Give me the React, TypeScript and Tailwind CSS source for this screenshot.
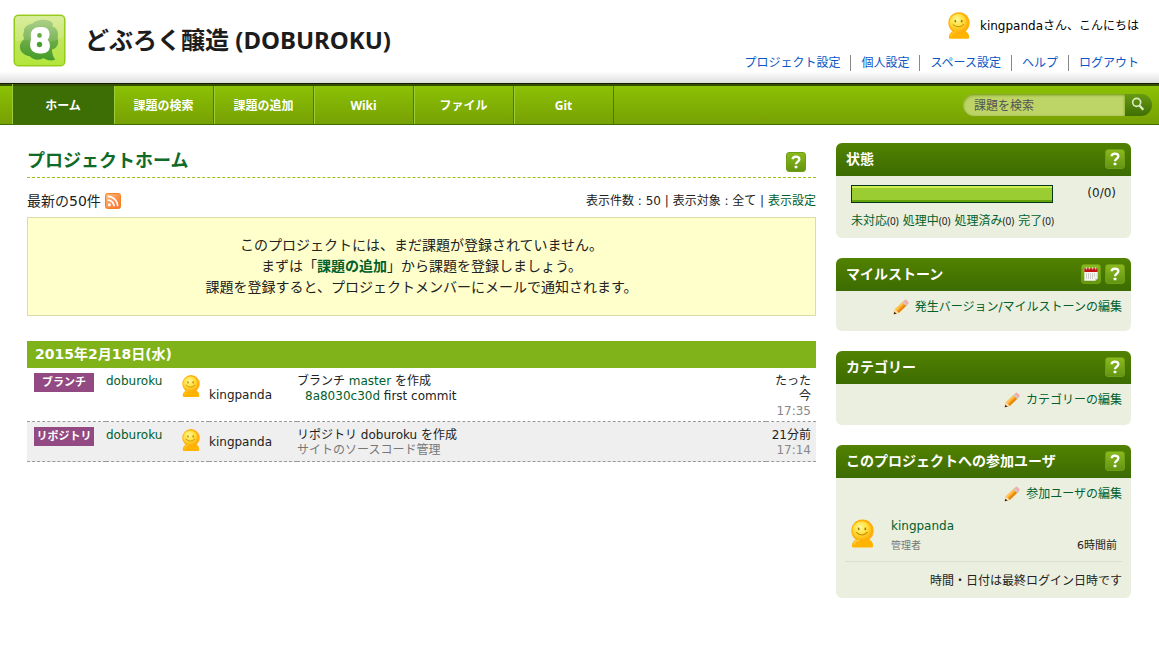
import type { ReactNode } from "react";

const linkGreen = "text-[#00602b] hover:underline";
const humanist = "font-['Noto_Sans','Noto_Sans_CJK_JP',sans-serif]";

function Logo() {
  return (
    <svg className="size-[53px] shrink-0" viewBox="0 0 158 158" aria-hidden="true">
      <defs>
        <linearGradient id="tile" x1="0" y1="0" x2="0" y2="1">
          <stop offset="0" stopColor="#d5ec92" />
          <stop offset="0.55" stopColor="#bfe45c" />
          <stop offset="1" stopColor="#b3e63a" />
        </linearGradient>
        <linearGradient id="blob" x1="0" y1="0" x2="0" y2="1">
          <stop offset="0" stopColor="#a0ca78" />
          <stop offset="0.5" stopColor="#6cac46" />
          <stop offset="1" stopColor="#439b28" />
        </linearGradient>
      </defs>
      <rect x="1.5" y="1.5" width="155" height="155" rx="15" fill="#c7dd86" />
      <rect x="4" y="4" width="150" height="150" rx="12" fill="url(#tile)" stroke="#96cb1c" strokeWidth="4" />
      <path
        d="M33 53C30 38 47 30 59 28C70 14 110 13 118 28C119 32 119 34 118 38C132 40 137 56 133 72C138 86 132 102 116 106C117 116 119 129 126 136C113 141 100 138 91 131C80 139 60 138 50 126C32 124 17 110 21 92C26 78 31 80 33 72C29 66 30 59 33 53Z"
        fill="url(#blob)"
      />
      <path d="M7 83C45 66 93 105 151 66V16Q151 7 142 7H16Q7 7 7 16Z" fill="#fff" opacity="0.12" />
      <path
        d="M80 39H86C101 39 109 48 109 60C109 68 107 73 103 77C108 82 110 88 110 95C110 110 100 118 86 118H79C61 118 51 107 51 92C51 85 52 81 54 77C53 72 53 68 53 63C53 48 64 39 80 39Z"
        fill="#fff"
      />
      <circle cx="79" cy="64" r="7" fill="#65ab42" />
      <circle cx="79" cy="91" r="8" fill="#4b9e30" />
    </svg>
  );
}

function Avatar({ className }: { className: string }) {
  return (
    <svg className={`shrink-0 ${className}`} viewBox="0 0 66 80" aria-hidden="true">
      <defs>
        <radialGradient id="face" cx="0.42" cy="0.32" r="0.65">
          <stop offset="0" stopColor="#fff79a" />
          <stop offset="0.55" stopColor="#ffe03c" />
          <stop offset="1" stopColor="#ffb60e" />
        </radialGradient>
      </defs>
      <path d="M3 78C1 66 9 60 18 54H49C59 60 65 67 63 78Q62 80 59 80H7Q4 80 3 78Z" fill="#ffb400" />
      <circle cx="33" cy="32" r="32" fill="#ffae0a" />
      <circle cx="31" cy="32" r="27" fill="url(#face)" />
      <path d="M9 72C10 63 17 60 24 59" fill="none" stroke="#ffd052" strokeWidth="3" />
      <ellipse cx="22" cy="27" rx="2.5" ry="4" fill="#a87306" />
      <ellipse cx="41" cy="27" rx="2.5" ry="4" fill="#a87306" />
      <path d="M15 37Q31 52 47 37" fill="none" stroke="#c38b0b" strokeWidth="3" strokeLinecap="round" />
    </svg>
  );
}

function Pencil() {
  return (
    <svg className="size-4 shrink-0" viewBox="0 0 48 48" aria-hidden="true">
      <path d="M2 46L6 31L32 6L43 17L17 42Z" fill="#ffa318" />
      <path d="M6 31L32 6L36 10L10 35Z" fill="#ffc35c" />
      <path d="M13 38L39 13L43 17L17 42Z" fill="#e5850d" />
      <path d="M2 46L6 31L17 42Z" fill="#fbe0b4" />
      <path d="M2 46L4 38L11 44Z" fill="#40220c" />
      <path d="M28 10L32 6L43 17L39 21Z" fill="#c9cbd2" />
      <path d="M32 6L36 2Q38 1 40 3L46 9Q48 11 46 14L43 17Z" fill="#f6a9ac" />
    </svg>
  );
}

function Rss() {
  return (
    <svg className="size-4" viewBox="0 0 48 48" aria-hidden="true">
      <defs>
        <linearGradient id="rss" x1="0" y1="0" x2="1" y2="1">
          <stop offset="0" stopColor="#ffc078" />
          <stop offset="1" stopColor="#fb6a2c" />
        </linearGradient>
      </defs>
      <rect x="1.5" y="1.5" width="45" height="45" rx="6" fill="url(#rss)" stroke="#f58220" strokeWidth="3" />
      <circle cx="13" cy="35" r="4.5" fill="#fff" />
      <path d="M8 21A19 19 0 0 1 27 40M8 10A30 30 0 0 1 38 40" fill="none" stroke="#fff" strokeWidth="5" />
    </svg>
  );
}

function Calendar() {
  return (
    <svg className="size-[14px]" viewBox="0 0 42 42" aria-hidden="true">
      <path d="M1 4H41V34L34 41H1Z" fill="#f7f7f5" />
      <path d="M34 41V34H41Z" fill="#c9cbc4" />
      <path d="M1 4H41V15H1Z" fill="#c21313" />
      <path d="M7 0V8M16 0V8M26 0V8M35 0V8" stroke="#fff" strokeWidth="2" />
      <path d="M6 21H37M6 27H37M6 33H30" stroke="#a3a3a3" strokeWidth="3" strokeDasharray="3 3" />
    </svg>
  );
}

function IconButton({ label, children }: { label: string; children: ReactNode }) {
  return (
    <button
      type="button"
      aria-label={label}
      className="flex size-5 items-center justify-center rounded-[3px] border border-[#6d9f15] bg-linear-to-b from-[#8aba1c] to-[#649512]"
    >
      {children}
    </button>
  );
}

function HelpButton() {
  return (
    <IconButton label="ヘルプ">
      <svg className="h-[14px] w-[10px]" viewBox="0 0 30 42" aria-hidden="true">
        <path d="M5 13C5 2 25 2 25 13C25 21 15 19 15 28" fill="none" stroke="#fff" strokeWidth="7" />
        <rect x="11" y="32" width="8" height="8" rx="2" fill="#fff" />
      </svg>
    </IconButton>
  );
}

function Panel({ title, extra, children }: { title: string; extra?: ReactNode; children: ReactNode }) {
  return (
    <section className="overflow-hidden rounded-md bg-[#eaefdf]">
      <div className="flex h-[33px] items-start justify-between bg-linear-to-b from-[#528200] to-[#3c6b02] pt-[6px] pr-[6px] pl-[10px]">
        <h2 className={`text-sm leading-5 font-bold text-white ${humanist}`}>{title}</h2>
        <div className="flex gap-1">
          {extra}
          <HelpButton />
        </div>
      </div>
      {children}
    </section>
  );
}

function EditLink({ children }: { children: ReactNode }) {
  return (
    <div className="flex justify-end pt-2 pr-[9px]">
      <a href="#" className={`flex items-center gap-[6px] leading-4 ${linkGreen}`}>
        <Pencil />
        {children}
      </a>
    </div>
  );
}

const accountLinks = ["プロジェクト設定", "個人設定", "スペース設定", "ヘルプ", "ログアウト"];
const tabs = ["ホーム", "課題の検索", "課題の追加", "Wiki", "ファイル", "Git"];
const statuses = ["未対応", "処理中", "処理済み", "完了"];

const activities = [
  {
    kind: "ブランチ",
    ago: "たった今",
    time: "17:35",
    shade: "bg-white",
    body: (
      <>
        <p>
          ブランチ <a href="#" className={linkGreen}>master</a> を作成
        </p>
        <p className="pl-2">
          <a href="#" className={linkGreen}>8a8030c30d</a> first commit
        </p>
      </>
    ),
  },
  {
    kind: "リポジトリ",
    ago: "21分前",
    time: "17:14",
    shade: "bg-[#efefef]",
    body: (
      <>
        <p>リポジトリ doburoku を作成</p>
        <p className="text-[#777]">サイトのソースコード管理</p>
      </>
    ),
  },
];

export default function App() {
  return (
    <div
      lang="ja"
      className="min-h-screen bg-white font-['DejaVu_Sans','Noto_Sans_CJK_JP',sans-serif] text-xs text-[#222]"
    >
      <header className="flex h-[83px] justify-between bg-linear-to-b from-white from-86% to-[#dedede] pr-5 pl-[13px]">
        <div className="flex items-start gap-[19px] pt-[14px]">
          <Logo />
          <h1 className={`text-2xl leading-[51px] font-bold text-[#1c1c1c] ${humanist}`}>どぶろく醸造 (DOBUROKU)</h1>
        </div>
        <div className="flex flex-col items-end gap-[14px] pt-3">
          <div className="flex items-start gap-[10px] text-black">
            <Avatar className="h-[27px] w-[22px]" />
            <span className="leading-[29px]">kingpandaさん、こんにちは</span>
          </div>
          <ul className="flex divide-x divide-[#888]">
            {accountLinks.map((label) => (
              <li key={label} className="px-[10px] leading-4 last:pr-0">
                <a href="#" className="text-[#0a56c4] hover:underline">{label}</a>
              </li>
            ))}
          </ul>
        </div>
      </header>

      <nav className="flex h-[42px] items-stretch justify-between border-t border-b border-t-[#111c00] border-b-[#3f6e03] bg-linear-to-b from-[#8cc305] to-[#78a004] pr-[7px] pl-3 shadow-[inset_0_2px_0_#374f03]">
        <ul className={`flex border-l border-[#9bcc3a] pt-[2px] ${humanist}`}>
          {tabs.map((label, i) => (
            <li key={label}>
              <a
                href="#"
                aria-current={i === 0 ? "page" : undefined}
                className="flex h-full w-[100px] items-center justify-center border-r border-l border-r-[#4d7a04] border-l-[#9bcc3a] pt-[2px] pr-px font-bold text-white aria-[current=page]:w-[101px] aria-[current=page]:border-[#3d6e05] aria-[current=page]:bg-[#3d6e05]"
              >
                {label}
              </a>
            </li>
          ))}
        </ul>
        <form className="flex items-center pt-[2px]" role="search" onSubmit={(e) => e.preventDefault()}>
          <input
            type="text"
            aria-label="課題を検索"
            placeholder="課題を検索"
            className="h-[22px] w-[162px] rounded-l-full bg-[#bdd467] pt-[2px] pl-[11px] text-xs text-[#333] shadow-[inset_0_1px_3px_#6f9410] outline-none placeholder:text-[#555]"
          />
          <button
            type="submit"
            aria-label="検索"
            className="flex h-[22px] w-[27px] items-center justify-center rounded-r-full bg-linear-to-b from-[#669a12] to-[#3f6f05] pr-px pb-[2px]"
          >
            <svg className="size-[14px]" viewBox="0 0 42 42" aria-hidden="true">
              <circle cx="17" cy="16" r="12" fill="none" stroke="#dcebc4" strokeWidth="5" />
              <path d="M26 26L37 38" stroke="#dcebc4" strokeWidth="7" />
            </svg>
          </button>
        </form>
      </nav>

      <div className="flex items-start gap-5 pt-[18px] pr-7 pb-6 pl-[27px]">
        <main className="min-w-0 flex-1">
          <div className="flex h-[35px] items-end justify-between border-b border-dashed border-[#9bbf1c] pr-[10px] pb-[5px]">
            <h2 className={`text-lg leading-6 font-bold text-[#0f6b28] ${humanist}`}>プロジェクトホーム</h2>
            <HelpButton />
          </div>
          <div className="flex h-[39px] items-center justify-between pt-[6px]">
            <div className="flex items-center gap-1 text-sm leading-5">
              最新の50件
              <a href="#" aria-label="RSS">
                <Rss />
              </a>
            </div>
            <p>
              表示件数 : 50 | 表示対象 : 全て | <a href="#" className={linkGreen}>表示設定</a>
            </p>
          </div>
          <div className="border border-[#dcdcaa] bg-[#ffffcc] py-[17px] text-center text-sm leading-[21px]">
            <p>このプロジェクトには、まだ課題が登録されていません。</p>
            <p>
              まずは「<a href="#" className="font-bold text-[#00602b] hover:underline">課題の追加</a>」から課題を登録しましょう。
            </p>
            <p>課題を登録すると、プロジェクトメンバーにメールで通知されます。</p>
          </div>

          <h3 className="mt-[25px] bg-[#80b31a] px-2 text-sm leading-[27px] font-bold text-white">2015年2月18日(水)</h3>
          <table className="w-full table-fixed border-collapse leading-[15px]">
            <colgroup>
              <col className="w-[79px]" />
              <col className="w-[75px]" />
              <col className="w-[28px]" />
              <col className="w-[88px]" />
              <col />
              <col className="w-[50px]" />
            </colgroup>
            <tbody>
              {activities.map((a) => (
                <tr key={a.kind} className={`h-10 border-b border-dashed border-[#999] align-top ${a.shade}`}>
                  <td className="pt-[5px] pl-[7px]">
                    <span className="block w-[60px] bg-[#934a82] text-center text-[11px] leading-[19px] font-bold whitespace-nowrap text-white">
                      {a.kind}
                    </span>
                  </td>
                  <td className="pt-[6px]">
                    <a href="#" className={linkGreen}>doburoku</a>
                  </td>
                  <td className="pt-[7px] pl-px">
                    <Avatar className="h-[22px] w-[18px]" />
                  </td>
                  <td className="pt-[2px] align-middle">kingpanda</td>
                  <td className="pt-[6px] pb-[2px]">{a.body}</td>
                  <td className="pt-[6px] pr-[5px] pb-[2px] text-right">
                    {a.ago}
                    <span className="block text-[#888]">{a.time}</span>
                  </td>
                </tr>
              ))}
            </tbody>
          </table>
        </main>

        <aside className="flex w-[295px] shrink-0 flex-col gap-5">
          <Panel title="状態">
            <div className="h-[62px] px-[15px] pt-[9px]">
              <div className="flex items-start justify-between">
                <div className="h-[18px] w-[202px] border border-[#06371c] bg-[#9acd32] shadow-[inset_0_2px_0_#cdee4e,inset_0_-2px_0_#62a30a]" />
                <span className="leading-4">(0/0)</span>
              </div>
              <ul className="flex gap-1 pt-[10px] leading-4">
                {statuses.map((s) => (
                  <li key={s}>
                    <a href="#" className={linkGreen}>{s}</a>
                    <span className={`text-[10px] ${humanist}`}>(0)</span>
                  </li>
                ))}
              </ul>
            </div>
          </Panel>

          <Panel
            title="マイルストーン"
            extra={
              <IconButton label="カレンダー">
                <Calendar />
              </IconButton>
            }
          >
            <div className="pb-4">
              <EditLink>発生バージョン/マイルストーンの編集</EditLink>
            </div>
          </Panel>

          <Panel title="カテゴリー">
            <div className="pb-[17px]">
              <EditLink>カテゴリーの編集</EditLink>
            </div>
          </Panel>

          <Panel title="このプロジェクトへの参加ユーザ">
            <EditLink>参加ユーザの編集</EditLink>
            <div className="mx-[9px] mt-[15px] flex items-start border-b border-[#dadfd3] pr-[5px] pb-1 pl-[6px]">
              <Avatar className="mt-[2px] h-[29px] w-[23px]" />
              <div className="flex-1 pl-[17px]">
                <a href="#" className={`block leading-[18px] ${linkGreen}`}>kingpanda</a>
                <div className="flex justify-between leading-[22px]">
                  <span className="text-[10px] text-[#777]">管理者</span>
                  <span className="text-[11px]">6時間前</span>
                </div>
              </div>
            </div>
            <p className="px-[9px] pt-[11px] pb-2 text-right leading-[17px]">時間・日付は最終ログイン日時です</p>
          </Panel>
        </aside>
      </div>
    </div>
  );
}
